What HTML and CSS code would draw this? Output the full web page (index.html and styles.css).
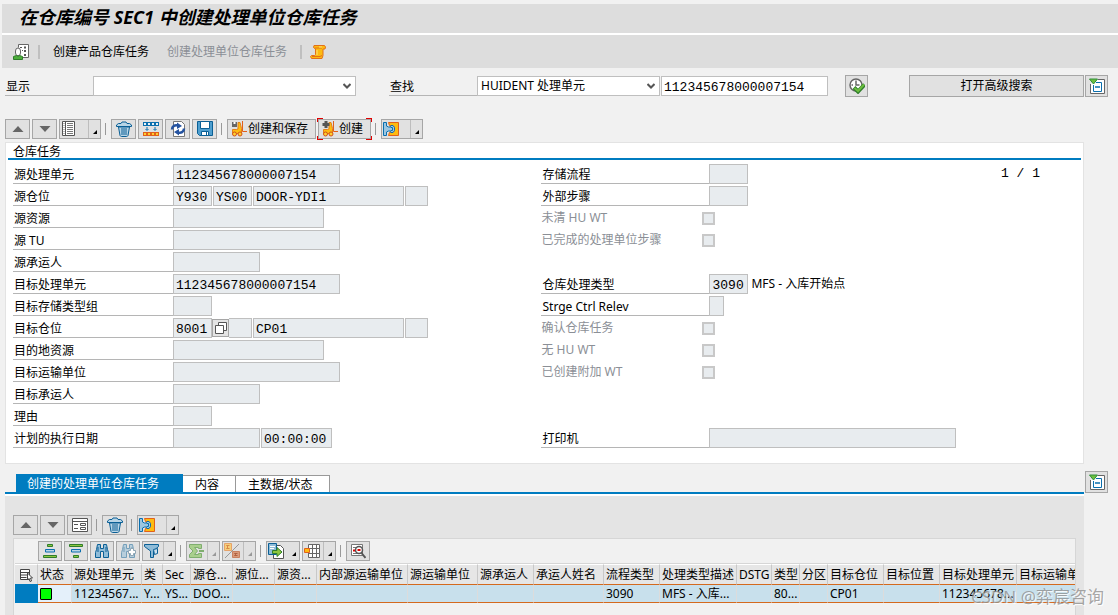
FILE: index.html
```html
<!DOCTYPE html>
<html lang="zh-CN">
<head>
    <meta charset="UTF-8">
    <meta name="viewport" content="width=device-width, initial-scale=1.0">
    <title>创建处理单位仓库任务</title>
    <link rel="stylesheet" href="styles.css">
</head>
<body>
    <!-- icon set, 16x16 each -->
    <svg class="sprite" aria-hidden="true">
        <symbol id="i-user" viewBox="0 0 16 16">
            <path d="M5.5 .5h10v13h-7" fill="#fff" stroke="#666"/>
            <path d="M5.500 .5v3" stroke="#666"/>
            <path d="M8 2h6v10H9z" fill="#fff"/>
            <path d="M7 3h2v1H7zM11 2.500h2v2h-2zM9 6h1v1H9zM11 6h2v2h-2zM11 10h2v2h-2z" fill="#555"/>
            <path d="M2.500 7a2.500 3 0 0 1 5 0v2l-1 2.500h-3l-1-2.500z" fill="#fff" stroke="#666"/>
            <path d="M.5 15.500v-3l3-1 1.500 1 1.500-1 3 1v3z" fill="#4cae3a" stroke="#2f7d2a"/>
        </symbol>
        <symbol id="i-scroll" viewBox="0 0 16 16">
            <path d="M4 1.500h10.500l1 1.500-.5 2h-2v6.500l-1 3H1.500l-1-2 1-1h3l1-1V5l-2-1.500z" fill="#fdbb10" stroke="#e2701a"/>
            <path d="M5 4h7M2 12.500h8l2-1" fill="none" stroke="#e2701a"/>
            <path d="M7 6v5M9 3h3" stroke="#ffe27a"/>
        </symbol>
        <symbol id="i-clock" viewBox="0 0 16 16">
            <circle cx="7" cy="7" r="6" fill="#fff" stroke="#666" stroke-width="1.500"/>
            <path d="M7 2.500V7h3.500M2.500 7h1.500M7 10v1.500" fill="none" stroke="#666" stroke-width="1.500"/>
            <path d="M5 9.500l4 4 6.500-7" fill="none" stroke="#2f7d2a" stroke-width="4"/>
            <path d="M5.500 10l3.500 3 6-6.500" fill="none" stroke="#6cbf3f" stroke-width="2"/>
        </symbol>
        <symbol id="i-layout" viewBox="0 0 16 16">
            <path d="M1.500 6v9.500h14V1.500H9" fill="#fff" stroke="#666"/>
            <path d="M7 4.500h5.500v9h-8V7" fill="#fff" stroke="#0a6fae"/>
            <path d="M6 9h5" stroke="#0a6fae" stroke-width="1.500"/>
            <path d="M.5 1h8l-4 5z" fill="#6cbf3f" stroke="#2f8f3a"/>
        </symbol>
        <symbol id="i-up" viewBox="0 0 16 16"><path d="M2.500 11L8 5l5.500 6z" fill="#666"/></symbol>
        <symbol id="i-down" viewBox="0 0 16 16"><path d="M2.500 5L8 11l5.500-6z" fill="#666"/></symbol>
        <symbol id="i-list" viewBox="0 0 16 16">
            <path d="M1.500 .5h12v14h-12z" fill="#fff" stroke="#555"/>
            <path d="M4.500 .5v14" stroke="#555"/>
            <path d="M2.500 2.500h1m-1 2h1m-1 2h1m-1 2h1m-1 2h1m-1 2h1M6 2.500h6m-6 2h6m-6 2h6m-6 2h6m-6 2h6m-6 2h6" stroke="#777"/>
        </symbol>
        <symbol id="i-trash" viewBox="0 0 16 16">
            <path d="M2.500 6l1.500 8.500q.5 1 1.500 1h5q1 0 1.500-1L13.500 6z" fill="#b9d5e6" stroke="#0a5f95"/>
            <path d="M6 7v7M8 7v7M10 7v7" stroke="#0a5f95"/>
            <path d="M.5 5.500V4l2-1.500H5L6 1h4l1 1.500h2.500l2 1.500v1.500z" fill="#b9d5e6" stroke="#0a5f95"/>
        </symbol>
        <symbol id="i-split" viewBox="0 0 16 16">
            <path d="M0 1h16v4H0z" fill="#0a6fae"/>
            <path d="M1 2h2v2H1zM5 2h2v2H5zM9 2h2v2H9zM13 2h2v2h-2z" fill="#e9f1f6"/>
            <path d="M4 6v3M12 6v3M2.500 8L4 9.500 5.500 8M10.500 8l1.500 1.500L13.500 8" fill="none" stroke="#0a6fae"/>
            <path d="M0 11h16v4H0z" fill="#e2601a"/>
            <path d="M1 12h2v2H1zM5 12h2v2H5zM9 12h2v2H9zM13 12h2v2h-2z" fill="#fdcf30"/>
        </symbol>
        <symbol id="i-refresh" viewBox="0 0 16 16">
            <path d="M3.500 .5h8l3 3v12h-11z" fill="#fff" stroke="#777"/>
            <path d="M2 8.500C2 5 5 3.500 8 4.500" fill="none" stroke="#2553a0" stroke-width="2.500"/>
            <path d="M7 1.500l5 3.500-5 3z" fill="#2553a0"/>
            <path d="M14 7.500c0 3.500-3 5-6 4" fill="none" stroke="#2553a0" stroke-width="2.500"/>
            <path d="M9 14.500L4 11l5-3z" fill="#2553a0"/>
        </symbol>
        <symbol id="i-save" viewBox="0 0 16 16">
            <path d="M.5 .5h15v14h-13l-2-2z" fill="#4f9fcf" stroke="#0a5f95"/>
            <path d="M3.500 .5h9v7h-9z" fill="#fff" stroke="#0a5f95"/>
            <path d="M4.500 10.500h7v4h-7z" fill="#fff" stroke="#0a5f95"/>
            <path d="M9.500 11v3" stroke="#0a5f95"/>
        </symbol>
        <symbol id="i-truck" viewBox="0 0 16 16">
            <path d="M7 8V1.500h2l1.500 6v5H1.500v-4h4z" fill="#fdbb10" stroke="#e2801a"/>
            <path d="M11.500 0v10.500h4.500" fill="none" stroke="#e2601a"/>
            <circle cx="3.500" cy="13" r="2" fill="#fdcf30" stroke="#d2501a"/>
            <circle cx="9" cy="13" r="2" fill="#fdcf30" stroke="#d2501a"/>
        </symbol>
        <symbol id="i-truck-save" viewBox="0 0 16 16">
            <use href="#i-truck"/>
            <path d="M1 1h5v5H1z" fill="#666"/><path d="M2.500 1h2v2h-2z" fill="#fff"/>
        </symbol>
        <symbol id="i-truck-new" viewBox="0 0 16 16">
            <use href="#i-truck"/>
            <path d="M2.500 0h3v2h2v3h-2v2h-3V5h-2V2h2z" fill="#555"/>
        </symbol>
        <symbol id="i-service" viewBox="0 0 16 16">
            <path d="M5.500 1.500h10v13h-10l1-3h3.500l1.500-2v-3l-1.500-2H6.500z" fill="#fdbb10" stroke="#e2601a"/>
            <path d="M.5 1.500h3V5l2 1h1.500l1-1.500h2l1.500 2v3l-1.500 2H8L7 10H5.500l-2 1v3.500h-3z" fill="#9cc6e0" stroke="#0a6fae"/>
            <path d="M7.500 6.500h2v3h-2" fill="none" stroke="#0a6fae"/>
        </symbol>
        <symbol id="i-form" viewBox="0 0 16 16">
            <path d="M.5 1.500h15v13H.5z" fill="#fff" stroke="#555"/>
            <path d="M.5 4.500h15M2 7.500h4m-4 4h4M8.500 6.500h5v2h-5zM8.500 10.500h5v2h-5z" fill="none" stroke="#555"/>
        </symbol>
        <symbol id="i-asc" viewBox="0 0 16 16">
            <path d="M5.500 1.500h5v2h-5zM1.500 12.500h13v2h-13z" fill="#8dc63f" stroke="#2f7d2a"/>
            <path d="M3.500 6.500h9v2.500h-9z" fill="#b9d5e6" stroke="#0a6fae"/>
        </symbol>
        <symbol id="i-desc" viewBox="0 0 16 16">
            <path d="M1.500 1.500h13v2h-13zM5.500 12.500h5v2h-5z" fill="#8dc63f" stroke="#2f7d2a"/>
            <path d="M3.500 6.500h9v2.500h-9z" fill="#b9d5e6" stroke="#0a6fae"/>
        </symbol>
        <symbol id="i-find" viewBox="0 0 16 16">
            <path d="M3.500 1.500h3v4h3v-4h3l1 5 1 3v5h-5v-6h-3v6h-5v-5l1-3z" fill="#8fbcd8" stroke="#0a5f95"/>
            <path d="M4 4v5M12 4v5" stroke="#0a5f95"/>
        </symbol>
        <symbol id="i-find-next" viewBox="0 0 16 16">
            <use href="#i-find" opacity=".5"/>
            <path d="M10.500 5.500h3v2h2v3h-2v2h-3v-2h-2v-3h2z" fill="#fff" stroke="#8fa6b5"/>
        </symbol>
        <symbol id="i-filter" viewBox="0 0 16 16">
            <path d="M.5 1.500h14v2L9.500 8v6.500h-3V8l-6-4.500z" fill="#8fbcd8" stroke="#0a5f95"/>
            <path d="M9.500 6.500l4-1v5l-3 1z" fill="#cfe2ee" stroke="#0a5f95"/>
        </symbol>
        <symbol id="i-sum" viewBox="0 0 16 16">
            <path d="M1.500 1.500h12v4h-3v-1h-4l3 3.500-3 3.500h4v-1h3v4h-12v-3L5 8 1.500 4.500z" fill="#a9cf8d" stroke="#7fae6f"/>
            <path d="M11 8h5" stroke="#7fae6f" stroke-width="2"/>
        </symbol>
        <symbol id="i-subsum" viewBox="0 0 16 16">
            <path d="M.5 .5h7v7h-7z" fill="#f6cf7a" stroke="#e6a36a"/>
            <path d="M5.500 2.500h-3L4 4l-1.500 1.500h3" fill="none" stroke="#d88a4a"/>
            <path d="M8.500 8.500h7v6h-7z" fill="#d99a7a" stroke="#c9805f"/>
            <path d="M13.500 10.500h-3l1.500 1-1.500 1h3" fill="none" stroke="#b0603f"/>
            <path d="M1 15L15 1" stroke="#999"/>
        </symbol>
        <symbol id="i-export" viewBox="0 0 16 16">
            <path d="M5.500 2.500h7l3 3v10h-10z" fill="#fff" stroke="#555"/>
            <path d="M.5.5h8v11h-8z" fill="#8fbcd8" stroke="#0a5f95"/>
            <path d="M2 3.500h5M2 5.500h4" stroke="#fff"/>
            <path d="M4.500 7.500H9v-3l5 4.500-5 4.500v-3H4.500z" fill="#8dc63f" stroke="#2f7d2a"/>
        </symbol>
        <symbol id="i-columns" viewBox="0 0 16 16">
            <path d="M4.500 1.500h11v13h-11z" fill="#fff" stroke="#666"/>
            <path d="M4 5.500h12M4 10.500h12M8.500 1v14M12.500 1v14" stroke="#666"/>
            <path d="M.5 5.500h5v4h-5z" fill="#fdbb10" stroke="#e2601a"/>
        </symbol>
        <symbol id="i-detail" viewBox="0 0 16 16">
            <path d="M1.500 1.500h11v11h-11z" fill="#fff" stroke="#777"/>
            <path d="M3 4.500h4M3 10.500h4" stroke="#777"/><path d="M3 7.500h4" stroke="#e00000" stroke-width="2"/>
            <circle cx="9" cy="7" r="3.500" fill="#fff" stroke="#555" stroke-width="1.500"/>
            <path d="M7.500 7h3" stroke="#e00000" stroke-width="2"/>
            <path d="M11.500 10l4 5" stroke="#555" stroke-width="2"/>
        </symbol>
        <symbol id="i-copy" viewBox="0 0 14 14">
            <path d="M4.500 1.500h8v8h-8z" fill="#fff" stroke="#555"/>
            <path d="M1.500 4.500h8v8h-8z" fill="#fff" stroke="#555"/>
        </symbol>
        <symbol id="i-select" viewBox="0 0 16 16">
            <path d="M2.500 2.500h9v10h-9zM2.500 5.500h9M2.500 8h7M2.500 10.500h6" fill="#fff" stroke="#444"/>
            <path d="M9.500 6l5 5h-2l1 3-1.500.5-1-3-1.500 1.500z" fill="#fff" stroke="#444"/>
        </symbol>
        <symbol id="i-chevron" viewBox="0 0 8 6"><path d="M.5 1L4 4.500 7.500 1" fill="none" stroke="#555" stroke-width="2"/></symbol>
    </svg>

    <header class="titlebar"><h1>在仓库编号 SEC1 中创建处理单位仓库任务</h1></header>

    <nav class="appbar">
        <button class="flat" aria-label="用户"><svg><use href="#i-user"/></svg></button>
        <span class="bar"></span>
        <button class="flat text">创建产品仓库任务</button>
        <button class="flat text" disabled>创建处理单位仓库任务</button>
        <span class="bar"></span>
        <button class="flat" aria-label="日志"><svg><use href="#i-scroll"/></svg></button>
    </nav>

    <form class="search">
        <label class="lbl" for="show">显示</label>
        <span class="pick pick-show"><select id="show"><option></option></select><svg><use href="#i-chevron"/></svg></span>
        <label class="lbl find" for="find">查找</label>
        <span class="pick pick-find"><select id="find"><option>HUIDENT 处理单元</option></select><svg><use href="#i-chevron"/></svg></span>
        <input class="query" aria-label="查找值" value="112345678000007154">
        <button type="button" class="btn tall go" aria-label="执行"><svg><use href="#i-clock"/></svg></button>
        <button type="button" class="btn tall advanced">打开高级搜索</button>
        <button type="button" class="btn tall" aria-label="布局"><svg><use href="#i-layout"/></svg></button>
    </form>

    <div class="tools main-tools">
        <button class="btn" aria-label="上"><svg><use href="#i-up"/></svg></button>
        <button class="btn" aria-label="下"><svg><use href="#i-down"/></svg></button>
        <button class="btn split" aria-label="列表"><svg><use href="#i-list"/></svg><span class="drop"></span></button>
        <span class="sep"></span>
        <button class="btn" aria-label="删除"><svg><use href="#i-trash"/></svg></button>
        <button class="btn" aria-label="拆分"><svg><use href="#i-split"/></svg></button>
        <button class="btn" aria-label="刷新"><svg><use href="#i-refresh"/></svg></button>
        <button class="btn" aria-label="保存"><svg><use href="#i-save"/></svg></button>
        <span class="sep"></span>
        <button class="btn wide"><svg><use href="#i-truck-save"/></svg>创建和保存</button>
        <button class="btn wide focus"><svg><use href="#i-truck-new"/></svg>创建</button>
        <span class="sep"></span>
        <button class="btn split" aria-label="服务"><svg><use href="#i-service"/></svg><span class="drop"></span></button>
    </div>

    <section class="panel">
        <h2>仓库任务</h2>
        <div class="form">
            <div class="col">
                <div class="row"><label class="lbl" for="f1">源处理单元</label><input id="f1" class="w-unit" readonly value="112345678000007154"></div>
                <div class="row"><label class="lbl" for="f2">源仓位</label><input id="f2" class="w-code" readonly value="Y930"><input class="w-code" aria-label="源分区" readonly value="YS00"><input class="w-name" aria-label="源仓位名" readonly value="DOOR-YDI1"><input class="w-mini" aria-label="源位置" readonly></div>
                <div class="row"><label class="lbl" for="f3">源资源</label><input id="f3" class="w-name" readonly></div>
                <div class="row"><label class="lbl" for="f4">源 TU</label><input id="f4" class="w-unit" readonly></div>
                <div class="row"><label class="lbl" for="f5">源承运人</label><input id="f5" class="w-date" readonly></div>
                <div class="row"><label class="lbl" for="f6">目标处理单元</label><input id="f6" class="w-unit" readonly value="112345678000007154"></div>
                <div class="row"><label class="lbl" for="f7">目标存储类型组</label><input id="f7" class="w-code" readonly></div>
                <div class="row"><label class="lbl" for="f8">目标仓位</label><span class="joined"><input id="f8" class="w-code" readonly value="8001"><button class="help" aria-label="选择"><svg><use href="#i-copy"/></svg></button><input class="w-mini" aria-label="目标分区" readonly></span><input class="w-name" aria-label="目标仓位名" readonly value="CP01"><input class="w-mini" aria-label="目标位置" readonly></div>
                <div class="row"><label class="lbl" for="f9">目的地资源</label><input id="f9" class="w-name" readonly></div>
                <div class="row"><label class="lbl" for="f10">目标运输单位</label><input id="f10" class="w-unit" readonly></div>
                <div class="row"><label class="lbl" for="f11">目标承运人</label><input id="f11" class="w-date" readonly></div>
                <div class="row"><label class="lbl" for="f12">理由</label><input id="f12" class="w-code" readonly></div>
                <div class="row"><label class="lbl" for="f13">计划的执行日期</label><input id="f13" class="w-date" readonly><input class="w-time" aria-label="时间" readonly value="00:00:00"></div>
            </div>
            <div class="col right">
                <div class="row"><label class="lbl" for="g1">存储流程</label><input id="g1" class="w-code" readonly><span class="count">1 / 1</span></div>
                <div class="row"><label class="lbl" for="g2">外部步骤</label><input id="g2" class="w-code" readonly></div>
                <div class="row check"><label for="g3">未清 HU WT</label><input type="checkbox" id="g3" disabled></div>
                <div class="row check"><label for="g4">已完成的处理单位步骤</label><input type="checkbox" id="g4" disabled></div>
                <div class="row"></div>
                <div class="row"><label class="lbl" for="g6">仓库处理类型</label><input id="g6" class="w-code" readonly value="3090"><span class="note">MFS - 入库开始点</span></div>
                <div class="row"><label class="lbl" for="g7">Strge Ctrl Relev</label><input id="g7" class="w-flag" readonly></div>
                <div class="row check"><label for="g8">确认仓库任务</label><input type="checkbox" id="g8" disabled></div>
                <div class="row check"><label for="g9">无 HU WT</label><input type="checkbox" id="g9" disabled></div>
                <div class="row check"><label for="g10">已创建附加 WT</label><input type="checkbox" id="g10" disabled></div>
                <div class="row"></div>
                <div class="row"></div>
                <div class="row"><label class="lbl" for="g13">打印机</label><input id="g13" class="w-printer" readonly></div>
            </div>
        </div>
    </section>

    <div class="tab-row">
        <div class="tabs">
            <button class="tab active">创建的处理单位仓库任务</button>
            <button class="tab">内容</button>
            <button class="tab">主数据/状态</button>
        </div>
        <button class="btn tall" aria-label="布局"><svg><use href="#i-layout"/></svg></button>
    </div>

    <section class="detail">
        <div class="tools">
            <button class="btn" aria-label="上"><svg><use href="#i-up"/></svg></button>
            <button class="btn" aria-label="下"><svg><use href="#i-down"/></svg></button>
            <button class="btn" aria-label="表单"><svg><use href="#i-form"/></svg></button>
            <span class="sep"></span>
            <button class="btn" aria-label="删除"><svg><use href="#i-trash"/></svg></button>
            <span class="sep"></span>
            <button class="btn split" aria-label="服务"><svg><use href="#i-service"/></svg><span class="drop"></span></button>
        </div>

        <div class="grid">
            <div class="tools grid-tools">
                <button class="btn" aria-label="升序"><svg><use href="#i-asc"/></svg></button>
                <button class="btn" aria-label="降序"><svg><use href="#i-desc"/></svg></button>
                <button class="btn" aria-label="查找"><svg><use href="#i-find"/></svg></button>
                <button class="btn" aria-label="查找下一个"><svg><use href="#i-find-next"/></svg></button>
                <button class="btn split" aria-label="过滤"><svg><use href="#i-filter"/></svg><span class="drop"></span></button>
                <span class="sep"></span>
                <button class="btn split" aria-label="总计" disabled><svg><use href="#i-sum"/></svg><span class="drop"></span></button>
                <button class="btn split" aria-label="小计" disabled><svg><use href="#i-subsum"/></svg><span class="drop"></span></button>
                <span class="sep"></span>
                <button class="btn split plain" aria-label="导出"><svg><use href="#i-export"/></svg><span class="drop"></span></button>
                <button class="btn split" aria-label="列"><svg><use href="#i-columns"/></svg><span class="drop"></span></button>
                <span class="sep"></span>
                <button class="btn" aria-label="详细"><svg><use href="#i-detail"/></svg></button>
            </div>
            <table>
                <colgroup>
                    <col class="c23"><col class="c34"><col class="c70"><col class="c21"><col class="c28"><col class="c42"><col class="c42"><col class="c42"><col class="c91"><col class="c70"><col class="c56"><col class="c70"><col class="c56"><col class="c77"><col class="c35"><col class="c28"><col class="c28"><col class="c56"><col class="c56"><col class="c77"><col>
                </colgroup>
                <thead>
                    <tr><th class="pick-all"><svg><use href="#i-select"/></svg></th><th>状态</th><th>源处理单元</th><th>类</th><th>Sec</th><th>源仓...</th><th>源位...</th><th>源资...</th><th>内部源运输单位</th><th>源运输单位</th><th>源承运人</th><th>承运人姓名</th><th>流程类型</th><th>处理类型描述</th><th>DSTG</th><th>类型</th><th>分区</th><th>目标仓位</th><th>目标位置</th><th>目标处理单元</th><th>目标运输单</th></tr>
                </thead>
                <tbody>
                    <tr><td class="marker"></td><td class="status"><span class="led"></span></td><td>11234567...</td><td>Y...</td><td>YS...</td><td>DOO...</td><td></td><td></td><td></td><td></td><td></td><td></td><td>3090</td><td>MFS - 入库...</td><td></td><td>80...</td><td></td><td>CP01</td><td></td><td>112345678...</td><td></td></tr>
                </tbody>
            </table>
        </div>
    </section>

    <div class="watermark">CSDN @弈宸咨询</div>
</body>
</html>
```

FILE: styles.css
```css
* {
    box-sizing: border-box;
}

body {
    position: relative;
    display: flex;
    flex-direction: column;
    min-height: 100vh;
    margin: 0;
    padding-top: 4px;
    background-color: #f1f1f1;
    color: #000;
    font-family: "Noto Sans", "Noto Sans CJK SC", sans-serif;
    font-size: 12px;
    line-height: 20px;
    overflow: hidden;
}

button, input, select {
    margin: 0;
    padding: 0;
    font: inherit;
    color: inherit;
    border-radius: 0;
}

svg {
    display: block;
    flex: none;
    width: 16px;
    height: 16px;
}

.sprite {
    position: absolute;
    width: 0;
    height: 0;
}

/* title and application bar */
.titlebar {
    margin-left: 2px;
    height: 29px;
    padding-left: 17px;
    background-color: #ddd;
}

.titlebar h1 {
    margin: 0;
    font-size: 18px;
    font-style: italic;
    font-weight: 700;
    line-height: 26px;
    white-space: nowrap;
}

.appbar {
    display: flex;
    align-items: center;
    height: 35px;
    margin-left: 2px;
    padding-left: 11px;
    border-top: 2px solid #fff;
    background-color: #ddd;
}

.flat {
    border: none;
    background: none;
}

.flat:disabled {
    color: #8b8f96;
}

.flat.text {
    margin-right: 18px;
}

.bar {
    width: 2px;
    height: 14px;
    margin: 0 13px 0 9px;
    background-color: #bfbfbf;
}

.flat:disabled + .bar {
    margin: 0 8px 0 -5px;
}

/* search line */
.search {
    display: flex;
    align-items: center;
    height: 22px;
    margin: 7px 10px 22px 5px;
}

.lbl {
    flex: none;
    height: 20px;
    padding-left: 1px;
    border-bottom: 1px solid #b5b5b5;
    line-height: 22px;
    white-space: nowrap;
}

.search .lbl {
    width: 88px;
}

.search .find {
    margin-left: 33px;
}

.pick {
    position: relative;
    flex: none;
    height: 20px;
}

.pick-show {
    width: 263px;
}

.pick-find {
    width: 183px;
    margin-right: 1px;
}

.pick select {
    width: 100%;
    height: 20px;
    padding-left: 3px;
    border: 1px solid #bfbfbf;
    background-color: #fff;
    appearance: none;
    line-height: 18px;
}

.pick svg {
    position: absolute;
    top: 7px;
    right: 5px;
    width: 8px;
    height: 6px;
    pointer-events: none;
}

.query, .row input {
    height: 20px;
    padding: 2px 2px 0;
    border: 1px solid #bfbfbf;
    background-color: #e8ecef;
    font-family: "Liberation Mono", "Noto Sans CJK SC", monospace;
    font-size: 13px;
    line-height: 16px;
}

.query {
    width: 167px;
    background-color: #fff;
}

.go {
    margin-left: 17px;
}

.advanced {
    margin: 0 1px 0 auto;
}

/* buttons */
.btn {
    display: flex;
    align-items: center;
    justify-content: center;
    flex: none;
    width: 25px;
    height: 20px;
    border: 1px solid #a6a6a6;
    background-color: #e1e1e1;
    line-height: 18px;
    white-space: nowrap;
}

.btn.tall {
    width: 23px;
    height: 22px;
}

.btn.advanced {
    width: 175px;
}

.btn.wide {
    width: auto;
    padding: 0 7px 0 3px;
    gap: 1px;
    line-height: 20px;
}

.btn.split {
    width: 42px;
    justify-content: space-between;
    padding-left: 1px;
}

.drop {
    display: flex;
    align-items: flex-end;
    justify-content: center;
    width: 12px;
    height: 18px;
    padding-bottom: 4px;
    border-left: 1px solid #bdbdbd;
}

.drop::after {
    content: "";
    border-left: 4px solid transparent;
    border-bottom: 4px solid #000;
}

.plain .drop {
    border-left-color: transparent;
}

.btn:disabled .drop::after {
    border-bottom-color: #999;
}

.tools {
    display: flex;
    align-items: center;
    gap: 2px;
}

.main-tools {
    margin: 0 0 3px 5px;
}

.sep {
    width: 1px;
    height: 12px;
    margin: 0 3px 0 2px;
    background-color: #999;
}

/* red corner marks on the focused button */
.focus {
    position: relative;
}

.focus::before, .focus::after {
    content: "";
    position: absolute;
    top: -2px;
    bottom: -2px;
    width: 5px;
    background: linear-gradient(#e00000, #e00000) top / 5px 1px no-repeat,
        linear-gradient(#e00000, #e00000) bottom / 5px 1px no-repeat;
    border: 0 solid;
    border-image: linear-gradient(#e00000 5px, transparent 5px calc(100% - 5px), #e00000 calc(100% - 5px)) 1;
}

.focus::before {
    left: -2px;
    border-left-width: 1px;
}

.focus::after {
    right: -2px;
    border-right-width: 1px;
}

/* form */
.panel {
    margin: 0 34px 0 5px;
    border: 1px solid #e3e3e3;
    background-color: #fff;
}

.panel h2 {
    height: 17px;
    margin: 0 2px;
    padding-left: 5px;
    border-bottom: 2px solid #007cc0;
    font-size: 12px;
    font-weight: 400;
    line-height: 17px;
}

.form {
    display: grid;
    grid-template-columns: minmax(0, 528fr) minmax(0, 541fr);
    padding: 4px 0 15px 7px;
}

.col {
    display: flex;
    flex-direction: column;
    gap: 2px;
}

.row {
    display: flex;
    align-items: center;
    gap: 1px;
    height: 20px;
}

.row .lbl {
    width: 160px;
    margin-right: -1px;
}

.right .lbl {
    width: 168px;
}

.row .w-unit { width: 167px; }
.row .w-name { width: 151px; }
.row .w-date { width: 87px; }
.row .w-time { width: 71px; }
.row .w-code { width: 39px; }
.row .w-mini { width: 23px; }
.row .w-flag { width: 15px; }
.row .w-printer { width: 247px; }

.joined {
    display: flex;
    align-items: center;
}

.joined .w-mini {
    border-left: none;
}

.help {
    display: flex;
    align-items: center;
    justify-content: center;
    width: 17px;
    height: 18px;
    border: 1px solid #a6a6a6;
    background-color: #e4e4e4;
}

.help svg {
    width: 14px;
    height: 14px;
}

.check label {
    width: 160px;
    color: #8b8f96;
    line-height: 22px;
}

.check input {
    width: 13px;
    height: 13px;
    padding: 0;
    border: 2px solid #c8c8c8;
    appearance: none;
}

.note {
    margin-left: 2px;
    line-height: 22px;
}

.count {
    margin: 0 43px 0 auto;
    font-family: "Liberation Mono", monospace;
    font-size: 13px;
}

/* tabs */
.tab-row {
    display: flex;
    gap: 1px;
    margin: 7px 10px 0 5px;
}

.tabs {
    display: flex;
    flex: 1;
    align-items: flex-end;
    height: 23px;
    padding-left: 11px;
    border-bottom: 2px solid #007cc0;
}

.tab {
    height: 17px;
    padding: 0 16px 0 12px;
    border: 1px solid #999;
    border-width: 1px 1px 0 0;
    background-color: #fff;
    line-height: 18px;
}

.tab.active {
    height: 18px;
    padding: 0 24px 0 11px;
    border: none;
    background-color: #007cc0;
    color: #fff;
    line-height: 20px;
}

/* result list */
.detail {
    display: flex;
    flex: 1;
    flex-direction: column;
    gap: 3px;
    margin: 0 34px 0 5px;
    padding: 19px 8px 0;
    border-top: 2px solid #fff;
    background-color: #e4e4e4;
}

.grid {
    flex: 1;
    padding-left: 1px;
    border: 1px solid #d6d6d6;
    border-bottom: none;
    background-color: #f1f1f1;
    overflow: hidden;
}

.grid-tools {
    padding: 2px 0 2px 23px;
    border-bottom: 1px solid #d6d6d6;
}

.grid-tools .btn {
    width: 24px;
}

.grid-tools .split {
    width: 34px;
    padding-left: 1px;
}

table {
    width: 100%;
    border-collapse: separate;
    border-spacing: 0;
    table-layout: fixed;
}

th, td {
    padding: 0 0 0 2px;
    border-right: 1px solid #c8c8c8;
    overflow: hidden;
    text-align: left;
    white-space: nowrap;
}

th {
    height: 20px;
    border-top: 1px solid #fff;
    background-color: #e6e6e6;
    font-weight: 400;
    line-height: 19px;
}

td {
    height: 19px;
    border-top: 1px solid #d4691e;
    border-bottom: 1px solid #d4691e;
    border-right-color: #dcdcdc;
    background-color: #c8e0ec;
    line-height: 17px;
}

th:last-child, td:last-child {
    border-right: none;
}

.pick-all {
    padding-left: 3px;
}

.marker {
    border-color: #007cc0;
    background-color: #007cc0;
}

.status {
    background-color: #e4f0fa;
}

.led {
    display: block;
    width: 12px;
    height: 12px;
    border: 1px solid #000;
    border-radius: 1px;
    background-color: #0f0;
}

.c21 { width: 21px; }
.c23 { width: 23px; }
.c28 { width: 28px; }
.c34 { width: 34px; }
.c35 { width: 35px; }
.c42 { width: 42px; }
.c56 { width: 56px; }
.c70 { width: 70px; }
.c77 { width: 77px; }
.c91 { width: 91px; }

.watermark {
    position: absolute;
    right: 14px;
    bottom: 6px;
    color: rgba(130, 130, 130, 0.7);
    font-size: 17px;
    line-height: 24px;
    text-shadow: 1px 1px 1px #fff;
}
```
